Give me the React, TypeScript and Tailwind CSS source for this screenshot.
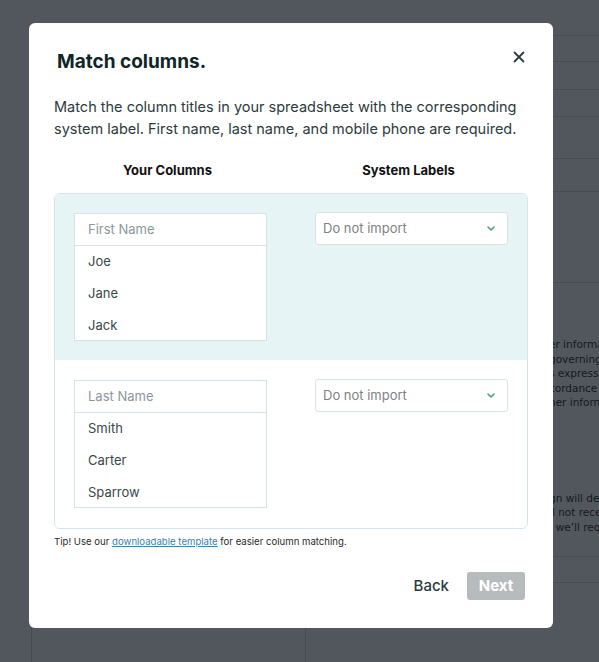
import { useState } from 'react';

type Mapping = { title: string; values: string[] };

const mappings: Mapping[] = [
  { title: 'First Name', values: ['Joe', 'Jane', 'Jack'] },
  { title: 'Last Name', values: ['Smith', 'Carter', 'Sparrow'] },
];

const bgRows = [36, 26, 28, 27, 42, 33, 91];

const noticeOne = ['er information', 'governing the', 's express cons', 'cordance with', 'her information'];
const noticeTwo = ['gn will deliver', 'll not receive', ', we\u2019ll require'];

function PageBehind() {
  return (
    <div className="flex h-full flex-col font-['DejaVu_Sans',sans-serif] text-[10.5px] leading-[14.5px] text-[#333]">
      {bgRows.map((h, i) => (
        <div key={i} className="ml-[31px] border-b border-[#d4d7db]" style={{ height: h }} />
      ))}
      <div className="ml-[31px] h-[274px] border-b border-[#d4d7db] pt-[54px] pl-[518px]">
        {noticeOne.map(l => (
          <div key={l} className="whitespace-nowrap">{l}</div>
        ))}
        <div className="mt-[81px]">
          {noticeTwo.map(l => (
            <div key={l} className="whitespace-nowrap">{l}</div>
          ))}
        </div>
      </div>
      <div className="ml-[31px] h-[26px] border-b border-[#d4d7db]" />
      <div className="ml-[31px] grid flex-1 grid-cols-[274px_1fr] border-l border-[#d4d7db]">
        <div className="border-r border-[#d4d7db]" />
        <div />
      </div>
    </div>
  );
}

function ColumnList({ title, values }: Mapping) {
  return (
    <div className="h-[128px] overflow-hidden border border-[#d3e3e8] bg-white">
      <div className="flex h-[32px] items-center border-b border-[#d3e3e8] px-[13px] text-[13px] text-[#8a979d]">
        {title}
      </div>
      {values.map(v => (
        <div key={v} className="flex h-[32px] items-center px-[13px] text-[13px] text-[#38484a]">
          {v}
        </div>
      ))}
    </div>
  );
}

function LabelSelect() {
  return (
    <button className="-mt-[1px] flex h-[33px] items-center justify-between self-start rounded-[3px] border border-[#d9e3e7] bg-white pl-[7px] pr-[12px] text-[13px] text-[#7d8184]">
      <span>Do not import</span>
      <svg width="8" height="5" viewBox="0 0 8 5" fill="none">
        <path d="M1 1l3 3 3-3" stroke="#4f9c86" strokeWidth="1.6" strokeLinecap="round" strokeLinejoin="round" />
      </svg>
    </button>
  );
}

export default function App() {
  const [open] = useState(true);

  return (
    <div className="relative h-[662px] w-[599px] overflow-hidden bg-white">
      <PageBehind />
      <div className="absolute inset-0 bg-[rgba(9,16,26,0.7)]" />

      {open && (
        <div className="absolute inset-0 pt-[23px] pl-[29px]">
          <div className="w-[524px] rounded-[6px] bg-white px-[25px] pt-[25px] pb-[28px] font-['Inter',sans-serif]">
            <div className="flex items-start justify-between">
              <h2 className="ml-[3px] text-[19px] font-bold leading-[28px] text-[#0f2628]">Match columns.</h2>
              <button className="mt-[3px] mr-[3px] text-[#2d3b3e]" aria-label="Close">
                <svg width="12" height="12" viewBox="0 0 12 12" fill="none">
                  <path d="M1.5 1.5l9 9M10.5 1.5l-9 9" stroke="currentColor" strokeWidth="1.8" strokeLinecap="round" />
                </svg>
              </button>
            </div>

            <p className="mt-[20px] text-[14.5px] leading-[22px] text-[#2c3a3d]">
              Match the column titles in your spreadsheet with the corresponding system label. First name, last name, and mobile phone are required.
            </p>

            <div className="mt-[21px] grid grid-cols-2 gap-[48px] pl-[17px] pr-[23px] text-center text-[13px] font-bold leading-[18px] text-[#111]">
              <div>Your Columns</div>
              <div>System Labels</div>
            </div>

            <div className="mt-[14px] overflow-hidden rounded-[6px] border border-[#d3e5ea]">
              {mappings.map((m, i) => (
                <div
                  key={m.title}
                  className={`grid grid-cols-2 gap-[48px] p-[19px] ${i === 0 ? 'bg-[#e6f4f6]' : 'bg-white pt-[20px] pb-[20px]'}`}
                >
                  <ColumnList {...m} />
                  <LabelSelect />
                </div>
              ))}
            </div>

            <p className="mt-[6px] text-[9.6px] leading-[14px] text-[#2a2a2a]">
              Tip! Use our <a className="text-[#3b7fae] underline">downloadable template</a> for easier column matching.
            </p>

            <div className="mt-[23px] mr-[3px] flex items-center justify-end gap-[18px]">
              <button className="text-[15px] font-medium text-[#2b3b3e]">Back</button>
              <button className="h-[28px] w-[58px] rounded-[3px] bg-[#b6bcbe] text-[15px] font-bold text-white">
                Next
              </button>
            </div>
          </div>
        </div>
      )}
    </div>
  );
}
